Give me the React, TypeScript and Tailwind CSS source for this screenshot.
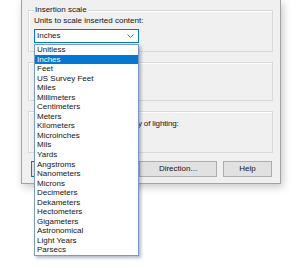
const units = [
  'Unitless',
  'Inches',
  'Feet',
  'US Survey Feet',
  'Miles',
  'Millimeters',
  'Centimeters',
  'Meters',
  'Kilometers',
  'Microinches',
  'Mils',
  'Yards',
  'Angstroms',
  'Nanometers',
  'Microns',
  'Decimeters',
  'Dekameters',
  'Hectometers',
  'Gigameters',
  'Astronomical',
  'Light Years',
  'Parsecs',
]

function GroupBox({ label, className, children }: { label?: string; className: string; children?: React.ReactNode }) {
  return (
    <div className={`relative border border-[#d9d9d9] shadow-[inset_1px_1px_0_#ffffff] ${className}`}>
      {label && (
        <span className="absolute -top-[6px] left-[5px] bg-[#f0f0f0] px-[1px] leading-[10px]">{label}</span>
      )}
      {children}
    </div>
  )
}

function Chevron({ color = '#606060' }: { color?: string }) {
  return (
    <svg width="7" height="4" viewBox="0 0 7 4" className="shrink-0">
      <polyline points="0.5,0.5 3.5,3.5 6.5,0.5" fill="none" stroke={color} strokeWidth="0.9" />
    </svg>
  )
}

function Button({ label, className }: { label?: string; className: string }) {
  return (
    <div className={`flex h-[16px] items-center justify-center border bg-[#e1e1e1] leading-none ${className}`}>
      {label}
    </div>
  )
}

export default function App() {
  return (
    <div
      className="relative h-[268px] w-[300px] overflow-hidden bg-white text-[8px] text-[#141414]"
      style={{ fontFamily: '"Liberation Sans", Arial, sans-serif' }}
    >
      {/* Drawing Units dialog, top part cropped; what the open list covers is left without text */}
      <div className="ml-[21px] flex h-[184px] w-[260px] flex-col border-x border-b border-[#a3a3a3] bg-[#f0f0f0] pl-[6px] shadow-[2px_3px_8px_rgba(0,0,0,0.22)]">
        <GroupBox label="Insertion scale" className="mt-[10px] h-[42px] w-[245px] pl-[5px] pt-[5px]">
          <div className="leading-[9px]">Units to scale inserted content:</div>
          <div className="mt-[4px] flex h-[14px] w-[105px] items-center justify-between border border-[#0078d7] bg-white pl-[2px] pr-[4px]">
            <span className="leading-none">Inches</span>
            <Chevron />
          </div>
        </GroupBox>

        <GroupBox className="mt-[10px] h-[39px] w-[245px]" />

        <GroupBox className="mt-[10px] h-[42px] w-[245px] pl-[5px] pt-[7px]">
          <div className="leading-[9px] tracking-[-0.14px]">Units for specifying the intensity of lighting:</div>
        </GroupBox>

        <div className="mt-[8px] flex">
          <Button className="ml-[3px] w-[49px] border-[#0078d7]" />
          <Button className="ml-[5px] w-[49px] border-[#adadad]" />
          <Button label="Direction..." className="ml-[5px] w-[78px] border-[#adadad]" />
          <Button label="Help" className="ml-[6px] w-[49px] border-[#adadad]" />
        </div>
      </div>

      {/* Open drop-down list of the insertion units combo */}
      <div className="absolute left-[34px] top-[44px] w-[105px] border border-[#7a9abf] bg-white shadow-[2px_2px_3px_rgba(40,60,90,0.35)]">
        {units.map((u) => (
          <div
            key={u}
            className={`h-[9.55px] pl-[2px] leading-[9.55px] ${u === 'Inches' ? 'bg-[#0078d7] text-white' : ''}`}
          >
            {u}
          </div>
        ))}
      </div>
    </div>
  )
}
